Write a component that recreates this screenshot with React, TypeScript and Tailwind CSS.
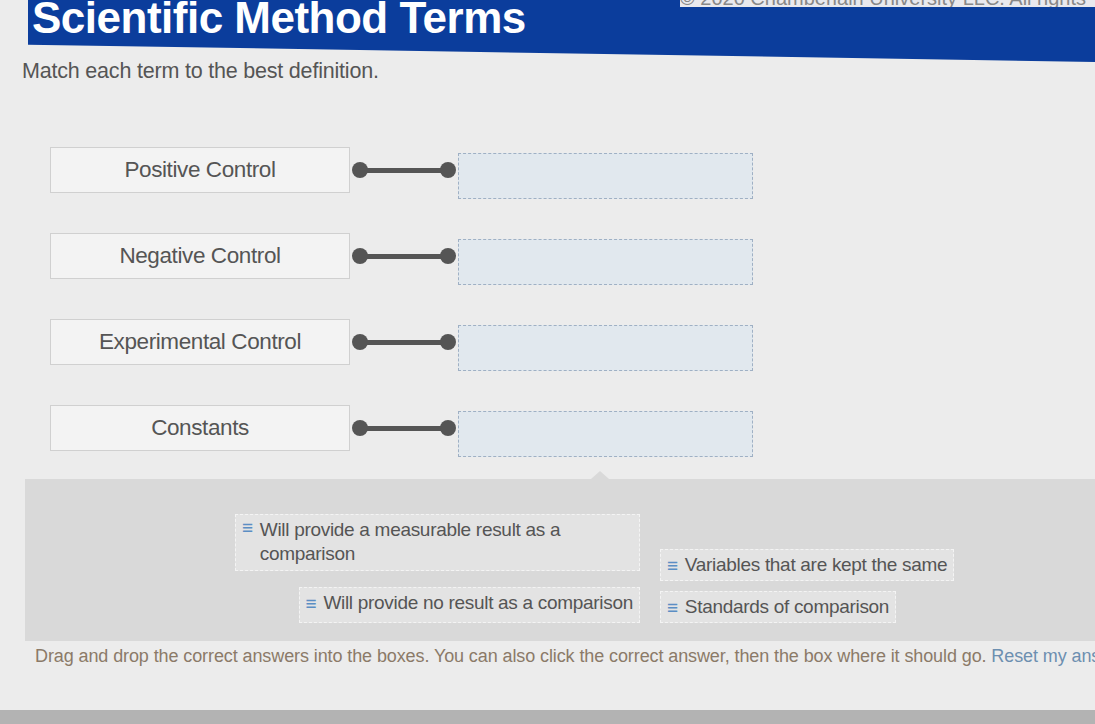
import React from "react";

interface Term {
    id: number;
    label: string;
}

const terms: Term[] = [
    { id: 1, label: "Positive Control" },
    { id: 2, label: "Negative Control" },
    { id: 3, label: "Experimental Control" },
    { id: 4, label: "Constants" },
];

const Grip = () => (
    <span className="mr-[7px] inline-block align-middle text-[19px] leading-none text-[#5b8ec4]">≡</span>
);

const Connector = () => (
    <div className="flex w-[108px] items-center px-[2px]">
        <div className="h-[16px] w-[16px] shrink-0 rounded-full bg-[#555]" />
        <div className="-mx-[2px] h-[5px] flex-1 bg-[#555]" />
        <div className="h-[16px] w-[16px] shrink-0 rounded-full bg-[#555]" />
    </div>
);

const Answer: React.FC<{ children: React.ReactNode; className?: string }> = ({ children, className }) => (
    <div
        className={`border border-dashed border-[#f4f4f4] bg-[#e3e3e3] px-[6px] py-[3px] text-[19px] leading-[24px] tracking-[-0.3px] text-[#555] ${className ?? ""}`}
    >
        {children}
    </div>
);

export default function App() {
    return (
        <div
            className="relative flex h-[724px] w-[1095px] flex-col overflow-hidden bg-[#ececec]"
            style={{ fontFamily: '"Liberation Sans", Arial, sans-serif' }}
        >
            {/* header bar */}
            <div className="relative ml-[28px] h-[62px] bg-[#0b3d9c] [clip-path:polygon(0_0,100%_0,100%_100%,0_72%)]">
                <h1 className="-mt-[8px] pl-[4px] text-[44px] font-bold leading-[52px] tracking-[-0.5px] text-white">
                    Scientific Method Terms
                </h1>
            </div>
            <div className="absolute right-0 top-0 h-[7px] w-[415px] overflow-hidden bg-[#e9e9ee]">
                <p className="-mt-[12px] whitespace-nowrap text-[20px] leading-[20px] text-[#888]">
                    © 2020 Chamberlain University LLC. All rights
                </p>
            </div>

            <p className="ml-[22px] mt-[-4px] text-[21.5px] leading-[26px] tracking-[-0.2px] text-[#555]">
                Match each term to the best definition.
            </p>

            {/* term rows */}
            <div className="ml-[50px] mt-[57px] flex flex-col gap-[28px]">
                {terms.map((term) => (
                    <div key={term.id} className="flex items-center">
                        <div className="flex h-[46px] w-[300px] items-center justify-center border border-[#d0d0d0] bg-[#f3f3f3] text-[22.5px] tracking-[-0.4px] text-[#555]">
                            {term.label}
                        </div>
                        <Connector />
                        <div className="mt-[12px] h-[46px] w-[295px] border border-dashed border-[#9fb0c4] bg-[#e1e8ee]" />
                    </div>
                ))}
            </div>

            {/* answer bank */}
            <div className="relative ml-[25px] mt-[22px] h-[162px] bg-[#d9d9d9] pt-[35px]">
                <div className="absolute -top-[8px] left-[566px] h-0 w-0 border-x-[9px] border-b-[8px] border-x-transparent border-b-[#d9d9d9]" />
                <div className="grid grid-cols-[615px_1fr] gap-x-[20px] gap-y-[16px]">
                    <Answer className="h-[57px] w-[405px] justify-self-end">
                        <div className="flex">
                            <Grip />
                            <span className="w-[330px]">Will provide a measurable result as a comparison</span>
                        </div>
                    </Answer>
                    <Answer className="mb-[-10px] self-end justify-self-start">
                        <Grip />
                        Variables that are kept the same
                    </Answer>
                    <Answer className="justify-self-end">
                        <Grip />
                        Will provide no result as a comparison
                    </Answer>
                    <Answer className="mt-[4px] justify-self-start">
                        <Grip />
                        Standards of comparison
                    </Answer>
                </div>
            </div>

            <p className="ml-[35px] mt-[4px] whitespace-nowrap text-[18px] leading-[22px] tracking-[-0.1px] text-[#8b7a68]">
                Drag and drop the correct answers into the boxes. You can also click the correct answer, then the box
                where it should go. <span className="text-[#6d8fb0]">Reset my answers</span>
            </p>

            <div className="mt-auto h-[14px] bg-[#b3b3b3]" />
        </div>
    );
}
